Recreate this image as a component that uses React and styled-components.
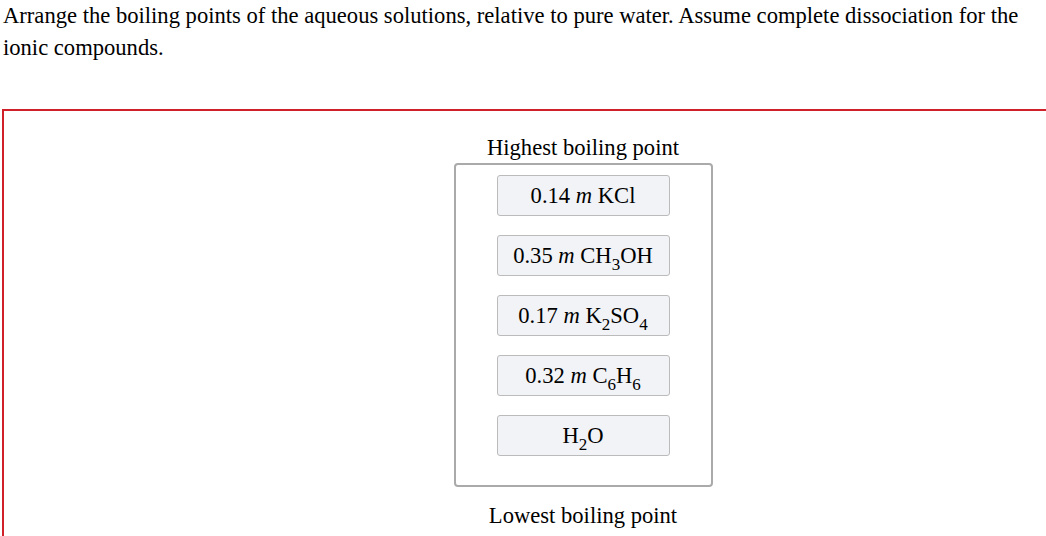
import React from "react";
import styled, { createGlobalStyle } from "styled-components";

const GlobalStyle = createGlobalStyle`
  html, body {
    overflow: hidden;
  }
  body {
    margin: 0;
    background: #fff;
    font-family: "Liberation Serif", "Times New Roman", serif;
    color: #000;
  }
`;

const Page = styled.div`
  padding: 0 0 0 2px;
`;

const Prompt = styled.p`
  margin: 0;
  padding: 0 0 0 1px;
  font-size: 22.6px;
  line-height: 32px;
`;

const Panel = styled.section`
  box-sizing: border-box;
  width: 1162px;
  margin-top: 45px;
  border: 2px solid #d0202a;
  height: 600px;
  display: flex;
  flex-direction: column;
  align-items: center;
  padding-top: 23px;
`;

const Label = styled.div`
  font-size: 22.6px;
  line-height: 28px;
  margin: ${props => props.$top ? "0 0 1px" : "15px 0 0"};
`;

const Bucket = styled.div`
  width: 255px;
  border: 2px solid #aaa;
  border-radius: 4px;
  padding: 10px 0 29px;
  display: flex;
  flex-direction: column;
  align-items: center;
  gap: 19px;
`;

const Chip = styled.div`
  width: 171px;
  height: 39px;
  border: 1px solid #bbb;
  border-radius: 3px;
  background: #f2f3f6;
  display: flex;
  align-items: center;
  justify-content: center;
  font-size: 22.6px;
  white-space: nowrap;
`;

const Formula = styled.span`
  line-height: 26px;
`;

const Sub = styled.sub`
  font-size: 17px;
  line-height: 0;
  vertical-align: -7px;
`;

const items = [
  <>0.14 <i>m</i> KCl</>,
  <>0.35 <i>m</i> CH<Sub>3</Sub>OH</>,
  <>0.17 <i>m</i> K<Sub>2</Sub>SO<Sub>4</Sub></>,
  <>0.32 <i>m</i> C<Sub>6</Sub>H<Sub>6</Sub></>,
  <>H<Sub>2</Sub>O</>,
];

export default function App() {
  return (
    <Page>
      <GlobalStyle />
      <Prompt>
        Arrange the boiling points of the aqueous solutions, relative to pure water. Assume complete dissociation for the
        ionic compounds.
      </Prompt>
      <Panel>
        <Label $top>Highest boiling point</Label>
        <Bucket>
          {items.map((item, i) => (
            <Chip key={i}>
              <Formula>{item}</Formula>
            </Chip>
          ))}
        </Bucket>
        <Label>Lowest boiling point</Label>
      </Panel>
    </Page>
  );
}
